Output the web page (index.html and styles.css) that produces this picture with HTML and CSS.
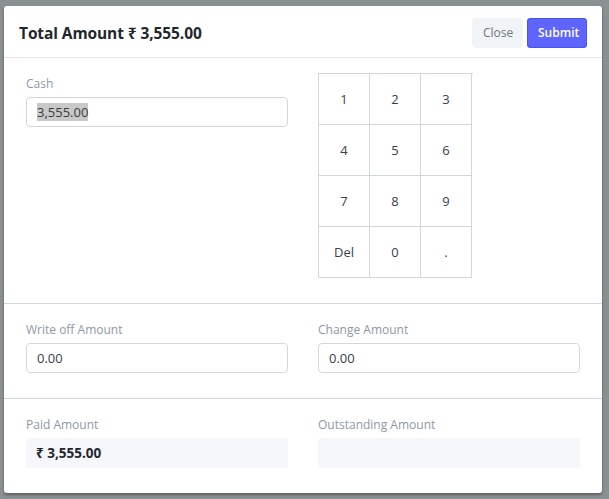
FILE: index.html
```html
<!DOCTYPE html>
<html>
<head>
<meta charset="utf-8">
<link rel="stylesheet" href="styles.css">
</head>
<body>
<div class="modal">
  <div class="modal-header">
    <div class="title">Total Amount ₹ 3,555.00</div>
    <div class="actions">
      <button class="btn btn-default">Close</button>
      <button class="btn btn-primary">Submit</button>
    </div>
  </div>
  <div class="section">
    <div class="field">
      <div class="label">Cash</div>
      <div class="input"><span class="selected">3,555.00</span></div>
    </div>
    <div class="keypad">
      <div class="key">1</div><div class="key">2</div><div class="key">3</div>
      <div class="key">4</div><div class="key">5</div><div class="key">6</div>
      <div class="key">7</div><div class="key">8</div><div class="key">9</div>
      <div class="key">Del</div><div class="key">0</div><div class="key">.</div>
    </div>
  </div>
  <div class="section">
    <div class="field">
      <div class="label">Write off Amount</div>
      <div class="input">0.00</div>
    </div>
    <div class="field">
      <div class="label">Change Amount</div>
      <div class="input">0.00</div>
    </div>
  </div>
  <div class="section last">
    <div class="field">
      <div class="label">Paid Amount</div>
      <div class="static bold">₹ 3,555.00</div>
    </div>
    <div class="field">
      <div class="label">Outstanding Amount</div>
      <div class="static"></div>
    </div>
  </div>
</div>
</body>
</html>
```
FILE: styles.css
```css
html, body {
  margin: 0;
  height: 100%;
}
body {
  background: #8b9092;
  padding: 6px 0 0 4px;
  box-sizing: border-box;
  font-family: "Open Sans", "Noto Sans", sans-serif;
  color: #36414c;
}
.modal {
  width: 598px;
  height: 487px;
  background: #fff;
  border-radius: 3px;
  box-sizing: border-box;
  overflow: hidden;
  box-shadow: 0 2px 3px rgba(0, 0, 0, 0.35);
}
.modal-header {
  height: 52px;
  box-sizing: border-box;
  padding: 2px 15px 0;
  display: flex;
  align-items: center;
  justify-content: space-between;
  border-bottom: 1px solid #e3e6e9;
}
.title {
  font-size: 15.5px;
  font-weight: 700;
  color: #1f272e;
  letter-spacing: -0.1px;
}
.actions {
  display: flex;
  gap: 4px;
}
.btn {
  height: 30px;
  border: none;
  border-radius: 4px;
  font-family: inherit;
  font-size: 12px;
  padding: 0 11px;
}
.btn-default {
  background: #f0f4f7;
  color: #6c7680;
  width: 51px;
}
.btn-primary {
  background: #5e64ff;
  color: #fff;
  width: 60px;
  font-weight: 600;
  box-shadow: inset 0 0 0 1px #4b52f0;
}
.section {
  display: grid;
  grid-template-columns: 262px 262px;
  column-gap: 30px;
  padding: 16px 22px 25px;
  border-bottom: 1px solid #d1d8dd;
  align-items: start;
}
.section.last {
  border-bottom: none;
}
.label {
  font-size: 12px;
  line-height: 20px;
  color: #8d99a6;
  margin-bottom: 3px;
}
.input {
  height: 30px;
  box-sizing: border-box;
  border: 1px solid #d1d8dd;
  border-radius: 4px;
  padding: 0 10px;
  display: flex;
  align-items: center;
  font-size: 13px;
  color: #36414c;
}
.selected {
  background: #c8c8c8;
  color: #3a3a3a;
  line-height: 18px;
}
.static {
  height: 30px;
  box-sizing: border-box;
  background: #f5f7fa;
  border-radius: 3px;
  padding: 0 10px;
  display: flex;
  align-items: center;
  font-size: 13.5px;
  color: #1f272e;
}
.static.bold {
  font-weight: 700;
}
.keypad {
  margin-top: -1px;
  width: 154px;
  display: grid;
  grid-template-columns: repeat(3, 51px);
  grid-auto-rows: 51px;
  border-top: 1px solid #d1d8dd;
  border-left: 1px solid #d1d8dd;
}
.key {
  border-right: 1px solid #d1d8dd;
  border-bottom: 1px solid #d1d8dd;
  display: flex;
  align-items: center;
  justify-content: center;
  font-size: 13px;
  color: #36414c;
}
```
